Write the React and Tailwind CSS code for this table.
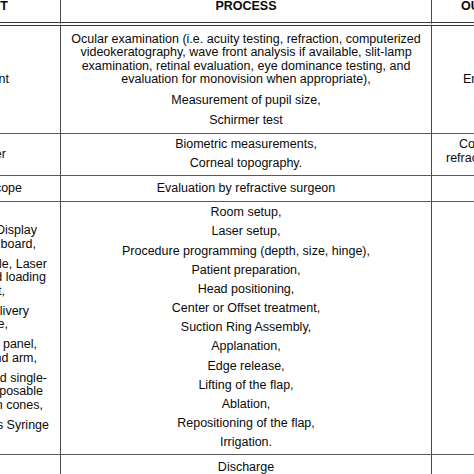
const cellFont = { fontFamily: '"Liberation Sans", Arial, sans-serif' }

// left column is cut off in the shot: each line sits with its right edge at a measured spot
function CutLine({ pr, children, bold }) {
  return (
    <div className={`flex justify-end ${pr} ${bold ? 'font-bold' : ''}`}>
      <span className="shrink-0 whitespace-nowrap">{children}</span>
    </div>
  )
}

function TailLine({ pl, children, bold }) {
  return (
    <div className={`flex justify-start ${pl} ${bold ? 'font-bold' : ''}`}>
      <span className="shrink-0 whitespace-nowrap">{children}</span>
    </div>
  )
}

const steps = [
  'Room setup,',
  'Laser setup,',
  'Procedure programming (depth, size, hinge),',
  'Patient preparation,',
  'Head positioning,',
  'Center or Offset treatment,',
  'Suction Ring Assembly,',
  'Applanation,',
  'Edge release,',
  'Lifting of the flap,',
  'Ablation,',
  'Repositioning of the flap,',
  'Irrigation.',
]

export default function App() {
  const c1 = 'w-[61px] shrink-0 border-r border-[#4a4a4a] overflow-hidden'
  const c2 = 'w-[371px] shrink-0 border-r border-[#4a4a4a] text-center'
  const c3 = 'flex-1 min-w-0 overflow-hidden'

  return (
    <div className="w-[474px] h-[474px] overflow-hidden bg-white text-[12.5px] leading-[13.5px] text-[#0a0a0a]" style={cellFont}>
      {/* header */}
      <div className="flex h-[26px] font-bold">
        <div className={`${c1} border-b-4 border-b-[#3a3a3a] border-double pt-0`}>
          <CutLine pr="pr-[52px]">EQUIPMENT</CutLine>
        </div>
        <div className={`${c2} border-b-4 border-b-[#3a3a3a] border-double`}>PROCESS</div>
        <div className={`${c3} border-b-4 border-b-[#3a3a3a] border-double`}>
          <TailLine pl="pl-[29px]">OUTCOME</TailLine>
        </div>
      </div>

      {/* assessment */}
      <div className="flex h-[108px]">
        <div className={`${c1} border-b border-b-[#5a5a5a] flex flex-col justify-center`}>
          <CutLine pr="pr-[51px]">Patient assessment</CutLine>
        </div>
        <div className={`${c2} border-b border-b-[#5a5a5a] flex flex-col justify-center pt-[1px]`}>
          <div className="whitespace-nowrap">
            Ocular examination (i.e. acuity testing, refraction, computerized<br />
            videokeratography, wave front analysis if available, slit-lamp<br />
            examination, retinal evaluation, eye dominance testing, and<br />
            evaluation for monovision when appropriate),
          </div>
          <div className="mt-[7px]">Measurement of pupil size,</div>
          <div className="mt-[6.5px]">Schirmer test</div>
        </div>
        <div className={`${c3} border-b border-b-[#5a5a5a] flex flex-col justify-center`}>
          <TailLine pl="pl-[31px]">Emmetropia</TailLine>
        </div>
      </div>

      {/* biometry */}
      <div className="flex h-[42px]">
        <div className={`${c1} border-b border-b-[#5a5a5a] flex flex-col justify-center`}>
          <CutLine pr="pr-[54px]">Topographer</CutLine>
        </div>
        <div className={`${c2} border-b border-b-[#5a5a5a] flex flex-col justify-center gap-[5.5px]`}>
          <div>Biometric measurements,</div>
          <div>Corneal topography.</div>
        </div>
        <div className={`${c3} border-b border-b-[#5a5a5a] flex flex-col pt-[4px]`}>
          <TailLine pl="pl-[27px]">Correct</TailLine>
          <TailLine pl="pl-[14px]">refractive error</TailLine>
        </div>
      </div>

      {/* surgeon */}
      <div className="flex h-[26px]">
        <div className={`${c1} border-b border-b-[#5a5a5a] flex flex-col justify-center`}>
          <CutLine pr="pr-[38px]">Slit-lamp microscope</CutLine>
        </div>
        <div className={`${c2} border-b border-b-[#5a5a5a] flex flex-col justify-center`}>
          Evaluation by refractive surgeon
        </div>
        <div className={`${c3} border-b border-b-[#5a5a5a]`} />
      </div>

      {/* procedure */}
      <div className="flex h-[253px]">
        <div className={`${c1} border-b border-b-[#5a5a5a] flex flex-col justify-center gap-[6.5px]`}>
          <div>
            <CutLine pr="pr-[23px]">Laser unit: Screen Display</CutLine>
            <CutLine pr="pr-[24px]">and Control board,</CutLine>
          </div>
          <div>
            <CutLine pr="pr-[13px]">Patient bed, Handle, Laser</CutLine>
            <CutLine pr="pr-[14px]">arm and loading</CutLine>
            <CutLine pr="pr-[55px]">unit,</CutLine>
          </div>
          <div>
            <CutLine pr="pr-[31px]">Beam delivery</CutLine>
            <CutLine pr="pr-[52px]">device,</CutLine>
          </div>
          <div>
            <CutLine pr="pr-[23px]">Operation panel,</CutLine>
            <CutLine pr="pr-[23px]">Microscope and arm,</CutLine>
          </div>
          <div>
            <CutLine pr="pr-[13px]">Suction ring and single-</CutLine>
            <CutLine pr="pr-[17px]">use disposable</CutLine>
            <CutLine pr="pr-[17px]">applanation cones,</CutLine>
          </div>
          <CutLine pr="pr-[11px]">Vacuum tubes Syringe</CutLine>
        </div>
        <div className={`${c2} border-b border-b-[#5a5a5a] flex flex-col justify-center gap-[5.7px]`}>
          {steps.map(s => (
            <div key={s}>{s}</div>
          ))}
        </div>
        <div className={`${c3} border-b border-b-[#5a5a5a]`} />
      </div>

      {/* discharge */}
      <div className="flex h-[30px]">
        <div className={c1} />
        <div className={`${c2} pt-[6px]`}>Discharge</div>
        <div className={c3} />
      </div>
    </div>
  )
}
